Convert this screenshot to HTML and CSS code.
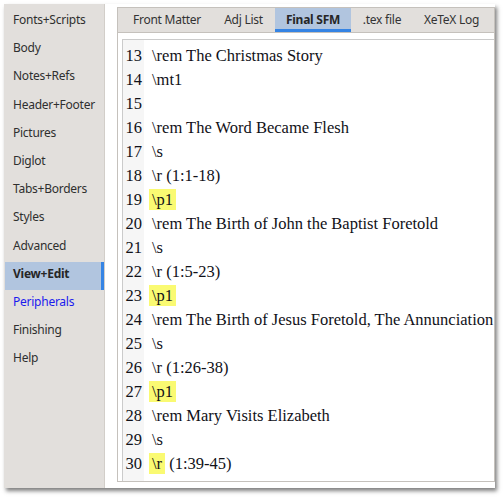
FILE: index.html
```html
<!DOCTYPE html>
<html>
<head>
<meta charset="utf-8">
<link rel="stylesheet" href="styles.css">
</head>
<body>
<div class="window">
  <nav class="sidebar">
    <div class="item">Fonts+Scripts</div>
    <div class="item">Body</div>
    <div class="item">Notes+Refs</div>
    <div class="item">Header+Footer</div>
    <div class="item">Pictures</div>
    <div class="item">Diglot</div>
    <div class="item">Tabs+Borders</div>
    <div class="item">Styles</div>
    <div class="item">Advanced</div>
    <div class="item selected">View+Edit</div>
    <div class="item link">Peripherals</div>
    <div class="item">Finishing</div>
    <div class="item">Help</div>
  </nav>
  <main class="main">
    <div class="notebook">
      <div class="tabbar">
        <div class="tab t-front">Front Matter</div>
        <div class="tab t-adj">Adj List</div>
        <div class="tab t-sfm active">Final SFM</div>
        <div class="tab t-tex">.tex file</div>
        <div class="tab t-log">XeTeX Log</div>
      </div>
      <div class="page">
        <div class="textview">
          <div class="gutter">
            <div class="ln">13</div><div class="ln">14</div><div class="ln">15</div><div class="ln">16</div>
            <div class="ln">17</div><div class="ln">18</div><div class="ln">19</div><div class="ln">20</div>
            <div class="ln">21</div><div class="ln">22</div><div class="ln">23</div><div class="ln">24</div>
            <div class="ln">25</div><div class="ln">26</div><div class="ln">27</div><div class="ln">28</div>
            <div class="ln">29</div><div class="ln">30</div>
          </div>
          <div class="code">
            <div class="ln">\rem The Christmas Story</div>
            <div class="ln">\mt1</div>
            <div class="ln"></div>
            <div class="ln">\rem The Word Became Flesh</div>
            <div class="ln">\s</div>
            <div class="ln">\r (1:1-18)</div>
            <div class="ln"><span class="hl">\p1</span></div>
            <div class="ln">\rem The Birth of John the Baptist Foretold</div>
            <div class="ln">\s</div>
            <div class="ln">\r (1:5-23)</div>
            <div class="ln"><span class="hl">\p1</span></div>
            <div class="ln">\rem The Birth of Jesus Foretold, The Annunciation</div>
            <div class="ln">\s</div>
            <div class="ln">\r (1:26-38)</div>
            <div class="ln"><span class="hl">\p1</span></div>
            <div class="ln">\rem Mary Visits Elizabeth</div>
            <div class="ln">\s</div>
            <div class="ln"><span class="hl">\r</span> (1:39-45)</div>
          </div>
        </div>
      </div>
    </div>
  </main>
</div>
</body>
</html>
```

FILE: styles.css
```css
* { box-sizing: border-box; }

html, body {
  margin: 0;
  padding: 0;
  background: #ffffff;
  width: 504px;
  height: 498px;
  overflow: hidden;
}

.window {
  margin: 4px 0 0 4px;
  width: 491px;
  height: 484px;
  display: flex;
  background: #ffffff;
  box-shadow: 2px 3px 4px rgba(0, 0, 0, 0.5);
  font-family: "Noto Sans", sans-serif;
  font-size: 12px;
  letter-spacing: -0.25px;
  color: #2f2f2f;
}

.sidebar {
  width: 101px;
  flex: none;
  background: #e2dfdc;
  border-right: 1px solid #d2cec9;
  padding: 4px 0 0 1px;
}

.item {
  height: 28.2px;
  display: flex;
  align-items: center;
  padding-left: 8px;
  padding-bottom: 5px;
  white-space: nowrap;
}

.item.selected {
  background: #b1c5df;
  border-right: 3px solid #3584e4;
  font-weight: bold;
  color: #262626;
}

.item.link {
  color: #1a1aee;
}

.main {
  flex: 1;
  padding: 3px 0 6px 12px;
}

.notebook {
  height: 100%;
  border: 1px solid #c5c1bc;
  display: flex;
  flex-direction: column;
}

.tabbar {
  height: 25px;
  flex: none;
  display: flex;
  background: #e2dfdc;
  border-bottom: 1px solid #c5c1bc;
  padding-left: 4px;
}

.tab {
  height: 24px;
  display: flex;
  align-items: center;
  justify-content: center;
  padding-bottom: 1px;
  white-space: nowrap;
  color: #333333;
}

.tab.active {
  background: #b1c5df;
  box-shadow: inset 0 -3px 0 #3584e4;
  font-weight: bold;
  color: #262626;
}

.t-front { width: 90px; }
.t-adj { width: 63px; }
.t-sfm { width: 76px; }
.t-tex { width: 62px; }
.t-log { width: 77px; }

.page {
  flex: 1;
  padding: 6px 0 0 4px;
  min-height: 0;
}

.textview {
  height: 100%;
  display: flex;
  border-left: 1px solid #cbcbcb;
  border-top: 1px solid #cbcbcb;
  font-family: "Liberation Serif", serif;
  font-size: 16.5px;
  letter-spacing: 0;
  color: #111118;
  overflow: hidden;
}

.gutter {
  width: 21px;
  flex: none;
  background: #f6f6f6;
  padding: 4px 2px 0 0;
  text-align: right;
}

.code {
  flex: 1;
  padding: 4px 0 0 8px;
  white-space: nowrap;
}

.ln {
  height: 24px;
  line-height: 24px;
}

.hl {
  display: inline-block;
  line-height: 21px;
  background: #fafa72;
  padding: 0 3px;
  margin-left: -3px;
}
```
